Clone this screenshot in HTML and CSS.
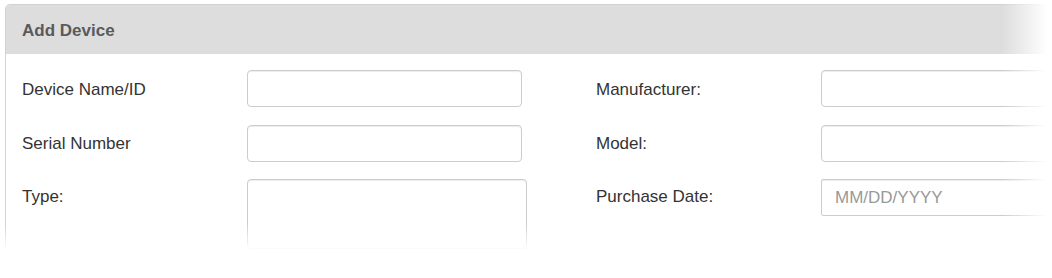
FILE: index.html
```html
<!DOCTYPE html>
<html>
<head>
<meta charset="utf-8">
<link rel="stylesheet" href="styles.css">
</head>
<body>
<div class="stage">
  <div class="panel">
    <div class="panel-heading">Add Device</div>
    <div class="panel-body">
      <div class="col">
        <div class="row"><label>Device Name/ID</label><input class="field" type="text"></div>
        <div class="row"><label>Serial Number</label><input class="field" type="text"></div>
        <div class="row row-tall"><label>Type:</label><textarea class="field area"></textarea></div>
      </div>
      <div class="col">
        <div class="row"><label>Manufacturer:</label><input class="field wide" type="text"></div>
        <div class="row"><label>Model:</label><input class="field wide" type="text"></div>
        <div class="row row-tall"><label>Purchase Date:</label><input class="field wide date" type="text" placeholder="MM/DD/YYYY"></div>
      </div>
    </div>
  </div>
  <div class="fade-right"></div>
  <div class="fade-bottom"></div>
</div>
</body>
</html>
```

FILE: styles.css
```css
html, body {
  margin: 0;
  padding: 0;
  background: #fff;
  overflow: hidden;
}
body {
  width: 1052px;
  height: 278px;
  font-family: "Liberation Sans", Arial, sans-serif;
  color: #333;
}
.stage {
  position: relative;
  width: 1052px;
  height: 278px;
  overflow: hidden;
}
.panel {
  margin: 4px 0 0 5px;
  width: 1200px;
  border: 1px solid #d2d2d2;
  border-bottom: none;
  border-radius: 5px 5px 0 0;
  background: #fff;
}
.panel-heading {
  box-sizing: border-box;
  height: 49px;
  background: #dddddd;
  border-radius: 4px 4px 0 0;
  padding: 2px 0 0 16px;
  display: flex;
  align-items: center;
  font-size: 17px;
  font-weight: bold;
  color: #5a5a5a;
}
.panel-body {
  display: flex;
  padding: 16px 0 30px 16px;
}
.col {
  width: 574px;
  display: flex;
  flex-direction: column;
  gap: 17.5px;
}
.row {
  display: grid;
  grid-template-columns: 225px auto;
  align-items: center;
}
.row label {
  padding-top: 2px;
}
.row-tall {
  align-items: start;
}
.row-tall label {
  padding-top: 0;
  line-height: 36px;
}
label {
  font-size: 17px;
  color: #333;
}
.field {
  box-sizing: border-box;
  width: 275px;
  height: 37px;
  border: 1px solid #cccccc;
  border-radius: 4px;
  box-shadow: inset 0 1px 1px rgba(0,0,0,.075);
  background: #fff;
  margin: 0;
  padding: 6px 13px;
  font-family: "Liberation Sans", Arial, sans-serif;
  font-size: 17px;
  color: #555;
  outline: none;
}
.area {
  width: 280px;
  height: 70px;
  resize: none;
  display: block;
}
.wide {
  width: 300px;
}
.date {
  border-radius: 2px;
  height: 37px;
}
.date::placeholder {
  color: #999;
}
.fade-right {
  position: absolute;
  top: 0;
  right: 0;
  width: 50px;
  height: 278px;
  background: linear-gradient(to right, rgba(255,255,255,0), #fff 90%);
}
.fade-bottom {
  position: absolute;
  left: 0;
  bottom: 0;
  width: 1052px;
  height: 55px;
  background: linear-gradient(to bottom, rgba(255,255,255,0), #fff 50%);
}
```
